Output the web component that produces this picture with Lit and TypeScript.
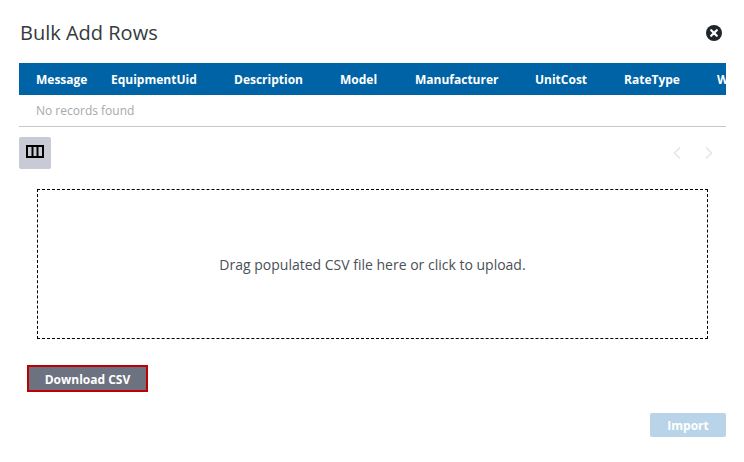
import { LitElement, html, css } from "lit";
import { customElement } from "lit/decorators.js";

const COLUMNS = [
    "Message",
    "EquipmentUid",
    "Description",
    "Model",
    "Manufacturer",
    "UnitCost",
    "RateType",
    "Warranty",
];

@customElement("app-root")
export class AppRoot extends LitElement {
    render() {
        return html`
            <div class="dialog">
                <header class="head">
                    <h1>Bulk Add Rows</h1>
                    <svg class="close" width="16" height="16" viewBox="0 0 16 16">
                        <circle cx="8" cy="8" r="8" fill="#212529"></circle>
                        <path
                            d="M5.2 5.2l5.6 5.6M10.8 5.2l-5.6 5.6"
                            stroke="#fff"
                            stroke-width="2.2"
                            stroke-linecap="round"
                        ></path>
                    </svg>
                </header>

                <div class="grid-head">
                    ${COLUMNS.map((c) => html`<span>${c}</span>`)}
                </div>
                <div class="empty">No records found</div>

                <div class="toolbar">
                    <button class="columns" aria-label="Columns">
                        <svg width="18" height="13" viewBox="0 0 18 13">
                            <path
                                d="M1 1h16v11H1zM6.5 1v11M11.5 1v11"
                                fill="none"
                                stroke="#000"
                                stroke-width="2"
                            ></path>
                        </svg>
                    </button>
                    <div class="pager">
                        <svg width="10" height="14" viewBox="0 0 10 14">
                            <path d="M8 1.5L2.5 7 8 12.5" fill="none" stroke="#e4e5e7" stroke-width="1.6"></path>
                        </svg>
                        <svg width="10" height="14" viewBox="0 0 10 14">
                            <path d="M2 1.5L7.5 7 2 12.5" fill="none" stroke="#e4e5e7" stroke-width="1.6"></path>
                        </svg>
                    </div>
                </div>

                <div class="drop">Drag populated CSV file here or click to upload.</div>

                <button class="download">Download CSV</button>

                <div class="foot">
                    <button class="import" disabled>Import</button>
                </div>
            </div>
        `;
    }

    static styles = css`
        :host {
            display: block;
            width: 744px;
            height: 462px;
            overflow: hidden;
            background: #fff;
            font-family: "Open Sans", sans-serif;
            color: #495057;
        }
        .dialog {
            padding: 0 18px 0 19px;
        }
        .head {
            display: flex;
            align-items: center;
            justify-content: space-between;
            box-sizing: border-box;
            height: 63px;
            padding: 3px 4px 0 1px;
        }
        h1 {
            margin: -1px 0 0;
            font-size: 20px;
            font-weight: 400;
            line-height: 27px;
            color: #343a40;
        }
        .close {
            display: block;
        }
        .grid-head {
            display: grid;
            grid-template-columns: 75px 123px 106px 75px 120px 89px 93px 100px;
            height: 32px;
            padding-left: 17px;
            align-items: center;
            overflow: hidden;
            background: #0063a6;
            color: #fff;
            font-size: 12px;
            font-weight: 700;
            white-space: nowrap;
        }
        .empty {
            height: 31px;
            line-height: 31px;
            padding-left: 17px;
            border-bottom: 1px solid #c8c8c8;
            font-size: 12px;
            color: #a4a9ae;
        }
        .toolbar {
            display: flex;
            justify-content: space-between;
            align-items: center;
            margin-top: 10px;
        }
        .columns {
            display: flex;
            align-items: center;
            justify-content: center;
            width: 32px;
            height: 32px;
            padding: 0 0 3px;
            border: none;
            border-radius: 2px;
            background: #c8cbd5;
        }
        .pager {
            display: flex;
            gap: 22px;
            padding-right: 12px;
        }
        .pager svg {
            display: block;
        }
        .drop {
            display: flex;
            align-items: center;
            justify-content: center;
            box-sizing: border-box;
            width: 671px;
            height: 150px;
            margin: 20px 0 0 18px;
            border: 1px dashed #000;
            font-size: 14px;
        }
        button {
            font-family: inherit;
        }
        .download {
            display: block;
            box-sizing: border-box;
            width: 121px;
            height: 27px;
            margin: 26px 0 0 8px;
            padding: 1px 0 0;
            border: 2px solid #c00000;
            background: #6c727f;
            color: #fff;
            font-size: 12px;
            font-weight: 700;
        }
        .foot {
            display: flex;
            justify-content: flex-end;
            margin-top: 21px;
        }
        .import {
            width: 76px;
            height: 24px;
            padding: 0;
            border: none;
            border-radius: 2px;
            background: #b9d4e9;
            color: #fff;
            font-size: 12px;
            font-weight: 700;
        }
    `;
}
